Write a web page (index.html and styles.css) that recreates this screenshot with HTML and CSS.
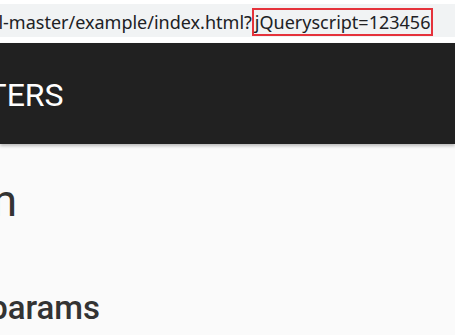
FILE: index.html
```html
<!DOCTYPE html>
<html>
<head>
<meta charset="utf-8">
<link rel="stylesheet" href="styles.css">
</head>
<body>
<div class="chrome">
  <div class="omnibox">
    <span class="url">file:///C:/jquery-url-master/example/index.html?<span class="hl">jQueryscript=123456</span></span>
  </div>
</div>
<nav class="nav">
  <span class="brand">URL PARAMETERS</span>
</nav>
<main class="content">
  <h1 class="title">Documentation</h1>
  <h2 class="sub">Get all params</h2>
</main>
</body>
</html>
```

FILE: styles.css
```css
html, body {
  margin: 0;
  padding: 0;
}
body {
  background: #fafafa;
  font-family: Roboto, "Noto Sans", sans-serif;
  overflow: hidden;
}
.chrome {
  background: #ffffff;
  padding: 4px 0 6px;
}
.omnibox {
  background: #f1f3f4;
  height: 33px;
  display: flex;
  align-items: center;
  white-space: nowrap;
  overflow: hidden;
}
.url {
  font-family: "Noto Sans", "Noto Sans CJK SC", sans-serif;
  font-size: 18px;
  color: #202124;
  margin-left: -153px;
  padding-top: 3px;
}
.hl {
  border: 2px solid #e5323b;
  padding: 0 1px;
}
.nav {
  background: #212121;
  height: 101px;
  display: flex;
  align-items: center;
  white-space: nowrap;
  overflow: hidden;
  box-shadow: 0 2px 3px rgba(0,0,0,0.25);
}
.brand {
  color: #ffffff;
  font-size: 32px;
  margin-left: -204px;
  padding-top: 3px;
}
.content {
  white-space: nowrap;
  overflow: hidden;
  color: #333333;
}
.title {
  font-size: 45px;
  font-weight: 400;
  margin: 30px 0 0 -290px;
  line-height: 1.2;
}
.sub {
  font-size: 33px;
  font-weight: 500;
  margin: 60px 0 0 -113px;
  line-height: 1.2;
}
```
